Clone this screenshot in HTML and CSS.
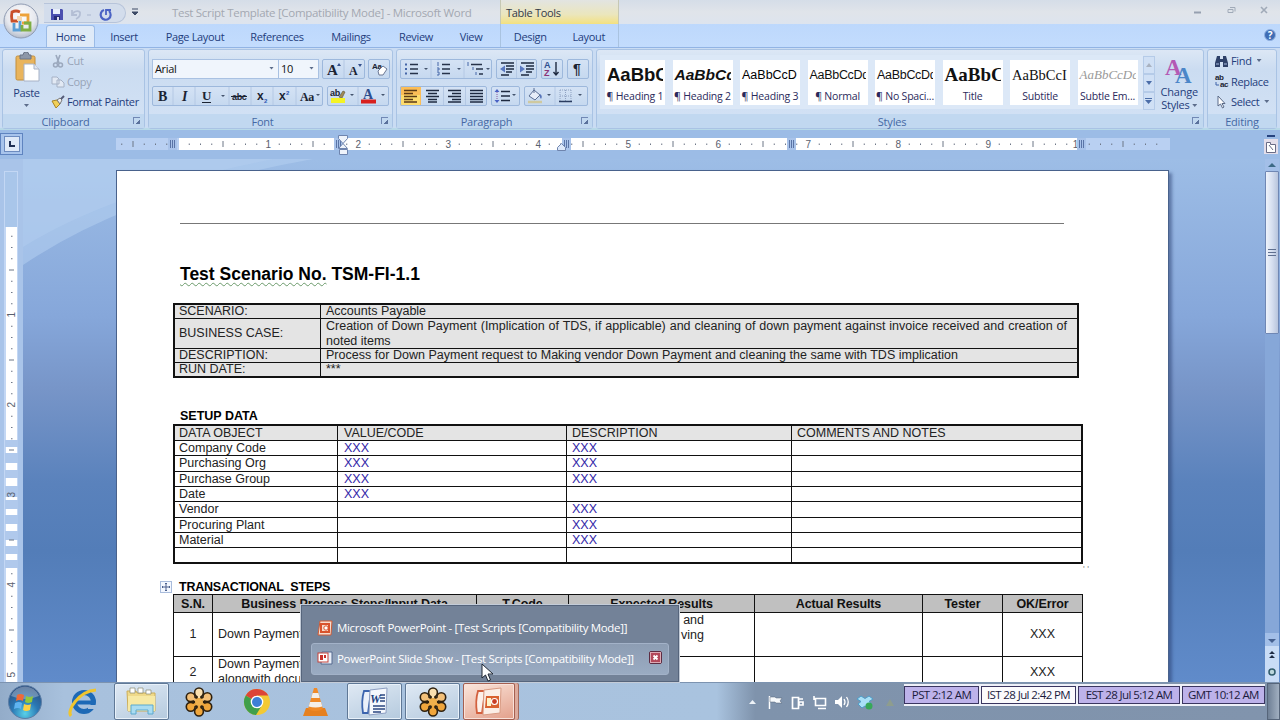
FILE: index.html
```html
<!DOCTYPE html>
<html lang="en">
<head>
    <meta charset="UTF-8">
    <meta name="viewport" content="width=device-width, initial-scale=1.0">
    <title>Test Script Template [Compatibility Mode] - Microsoft Word</title>
    <link rel="stylesheet" href="styles.css">
</head>
<body>
    <!-- Title bar -->
    <header class="titlebar">
        <div class="quick-access">
            <svg width="80" height="20" viewBox="0 0 80 20">
                <path d="M7 5h11l1 1v10H7z" fill="#4a4fb0"/><path d="M9 5h7v5H9z" fill="#e8eefc"/><path d="M10 12h6v4h-6z" fill="#272c78"/><path d="M13 13h2v3h-2z" fill="#dde"/>
                <path d="M28 6v5h5M28 11c2-5 9-5 8-1 0 2-2 4-4 5" fill="none" stroke="#b3bed4" stroke-width="1.800"/>
                <path d="M43 11h4" stroke="#a9b6cf"/>
                <path d="M60 6a5 5 0 1 0 5 1" fill="none" stroke="#4b63c4" stroke-width="2.200"/><path d="M62 11V6h5" fill="none" stroke="#4b63c4" stroke-width="1.800"/>
            </svg>
        </div>
        <svg class="qa-more" width="8" height="8" viewBox="0 0 8 8"><path d="M1 1h6M1 4h6l-3 3z" stroke="#3c4a66" fill="#3c4a66"/></svg>
        <span class="title">Test Script Template [Compatibility Mode] - Microsoft Word</span>
        <span class="table-tools">Table Tools</span>
        <svg class="win-buttons" width="90" height="24" viewBox="0 0 90 24">
            <path d="M4 12.500h7" stroke="#96a0b0" stroke-width="2"/>
            <path d="M38 9.500h5v3h-5zM40 7.500h5v4" stroke="#a0aab8" fill="none"/>
            <path d="M71 7l6 6M77 7l-6 6" stroke="#a0aab8" stroke-width="1.600"/>
        </svg>
    </header>
    <svg class="office-button" width="38" height="40" viewBox="0 0 38 40">
        <defs><radialGradient id="orb" cx=".5" cy=".35" r=".65"><stop offset="0" stop-color="#fff"/><stop offset=".65" stop-color="#e6e8ee"/><stop offset="1" stop-color="#b3bccb"/></radialGradient></defs>
        <circle cx="19" cy="20" r="17" fill="url(#orb)" stroke="#8f9bb2"/>
        <g fill="none" stroke-width="2.800">
            <path d="M18 11q-4-2-8 0-1 4 0 9h6" stroke="#c9502a"/>
            <path d="M18 14h8v8h-6" stroke="#eda23a"/>
            <path d="M12 22v7h6v-9" stroke="#5a9ed6"/>
            <path d="M20 24v5h8v-7h-6" stroke="#7fae45"/>
        </g>
        <path d="M15 15h5v5h-5z" fill="#f7d9b0"/>
    </svg>

    <!-- Tabs -->
    <nav class="tabs">
        <a class="tab active">Home</a>
        <a class="tab insert">Insert</a>
        <a class="tab page-layout">Page Layout</a>
        <a class="tab references">References</a>
        <a class="tab mailings">Mailings</a>
        <a class="tab review">Review</a>
        <a class="tab view">View</a>
        <div class="context-tabs">
            <a class="tab design">Design</a>
            <a class="tab layout">Layout</a>
        </div>
        <svg class="help" width="14" height="14" viewBox="0 0 14 14"><circle cx="7" cy="7" r="5.500" fill="#3f6db5" stroke="#8fb0e0"/><text x="7" y="10.500" text-anchor="middle" class="help-mark">?</text></svg>
    </nav>

    <!-- Ribbon -->
    <section class="ribbon">
        <div class="group clipboard">
            <div class="group-body">
                <div class="paste">
                    <svg width="28" height="32" viewBox="0 0 28 32">
                        <rect x="3" y="4" width="19" height="24" rx="1.500" fill="#e9b45c" stroke="#c28e3c"/>
                        <path d="M7 3h3a3 3 0 0 1 6 0h2v4H7z" fill="#8d97a8" stroke="#6a7486"/>
                        <path d="M11 12h10l5 5v12H11z" fill="#fff" stroke="#a7b2c6"/><path d="M21 12v5h5" fill="#dfe6f2" stroke="#a7b2c6"/>
                    </svg>
                    <span>Paste</span>
                    <i class="arrow"></i>
                </div>
                <div class="clip-list">
                    <span class="off"><svg width="14" height="14" viewBox="0 0 14 14"><path d="M5 1l3 8M9 1L6 9" stroke="#9ba8bd" stroke-width="1.600"/><circle cx="4.500" cy="11" r="2" fill="none" stroke="#9ba8bd" stroke-width="1.500"/><circle cx="9.500" cy="11" r="2" fill="none" stroke="#9ba8bd" stroke-width="1.500"/></svg>Cut</span>
                    <span class="off"><svg width="14" height="14" viewBox="0 0 14 14"><path d="M1 3h5l2 2v5H1zM6 6h4l3 3v4H6z" fill="#e2e9f4" stroke="#a6b2c6"/></svg>Copy</span>
                    <span><svg width="14" height="14" viewBox="0 0 14 14"><path d="M1 6l5-1 3 4-4 4z" fill="#f1cf57" stroke="#a98526"/><path d="M6 5l3-2 2 2-2 4z" fill="#eee" stroke="#777"/><path d="M10 4l3-3" stroke="#555c78" stroke-width="2"/></svg>Format Painter</span>
                </div>
            </div>
            <div class="group-label">Clipboard<i class="launcher"></i></div>
        </div>

        <div class="group font">
            <div class="group-body rows">
                <div class="row">
                    <div class="combo name">Arial<i class="arrow"></i></div>
                    <div class="combo size">10<i class="arrow"></i></div>
                    <svg class="btns grow" width="43" height="20" viewBox="0 0 43 20">
                        <text x="5" y="16" class="serif s15">A</text><path d="M15 7l2-3 2 3z" fill="#34508c"/>
                        <path d="M22 1v18" stroke="#b4c8e4"/>
                        <text x="27" y="16" class="serif s12">A</text><path d="M36 5h4l-2 3z" fill="#34508c"/>
                    </svg>
                    <svg class="btns" width="22" height="20" viewBox="0 0 22 20"><text x="4" y="10" class="sans s8">Aa</text><path d="M10 12l5-5 4 3-4 6h-4z" fill="#fff" stroke="#6c7894"/></svg>
                </div>
                <div class="row">
                    <svg class="btns" width="171" height="20" viewBox="0 0 171 20">
                        <text x="6" y="15" class="serif s14">B</text>
                        <text x="30" y="15" class="serif s14 ital">I</text>
                        <text x="50" y="14" class="serif s13">U</text><path d="M50 16.500h9" stroke="#1b2433"/>
                        <path d="M69 9h4l-2 2z" fill="#44546e"/>
                        <text x="80" y="14" class="sans s9">abc</text><path d="M79 10.500h16" stroke="#1b2433"/>
                        <text x="105" y="14" class="sans s12">x</text><text x="112" y="17" class="sans s6 blue">2</text>
                        <text x="127" y="14" class="sans s12">x</text><text x="134" y="9" class="sans s6 blue">2</text>
                        <text x="148" y="15" class="serif s12">Aa</text><path d="M164 8h4l-2 2z" fill="#44546e"/>
                        <path d="M21 1v18M43 1v18M77 1v18M99 1v18M121 1v18M144 1v18" stroke="#b4c8e4"/>
                    </svg>
                    <svg class="btns" width="62" height="20" viewBox="0 0 62 20">
                        <text x="3" y="10" class="sans s9">ab</text><path d="M12 11l4-6 2 1-3 6z" fill="#a08b55" stroke="#5c5030" stroke-width=".6"/><rect x="4" y="12" width="14" height="5" fill="#f4f325"/>
                        <path d="M23 8h4l-2 2z" fill="#44546e"/><path d="M31 1v18" stroke="#b4c8e4"/>
                        <text x="36" y="13" class="serif s14 navy">A</text><rect x="34" y="13.500" width="15" height="4" fill="#d8201e"/>
                        <path d="M54 8h4l-2 2z" fill="#44546e"/>
                    </svg>
                </div>
            </div>
            <div class="group-label">Font<i class="launcher"></i></div>
        </div>

        <div class="group paragraph">
            <div class="group-body rows">
                <div class="row">
                    <svg class="btns" width="92" height="20" viewBox="0 0 92 20">
                        <path d="M10 5.500h8M10 10h8M10 14.500h8M42 5.500h8M42 10h8M42 14.500h8M71 5.500h11M76 10h7M79 15h4" stroke="#26334a" stroke-width="1.500"/>
                        <path d="M5 4.500h2v2H5zM5 9h2v2H5zM5 13.500h2v2H5z" fill="#4566a8"/>
                        <path d="M38 3v4M37 9h2v2h-2M37 13h2v3h-2M68 3v4M73 8v3M76 13v3" stroke="#4566a8" fill="none"/>
                        <path d="M24 9h4l-2 2zM57 9h4l-2 2zM86 9h4l-2 2z" fill="#44546e"/>
                        <path d="M31 1v18M64 1v18" stroke="#b4c8e4"/>
                    </svg>
                    <svg class="btns" width="41" height="20" viewBox="0 0 41 20">
                        <path d="M5 4h13M10 7h8M10 10h8M10 13h6M5 16h8M25 4h13M30 7h8M30 10h8M30 13h6M25 16h8" stroke="#1e2a40" stroke-width="1.600"/>
                        <path d="M9 6.500v7L4 10zM24 6.500v7l5-3.500z" fill="#5b79c0"/><path d="M20.500 1v18" stroke="#b4c8e4"/>
                    </svg>
                    <svg class="btns" width="22" height="20" viewBox="0 0 22 20"><text x="3" y="9" class="sans s9 navy">A</text><text x="3" y="17" class="sans s9 plum">Z</text><path d="M15 3v13M12.500 13l2.500 3 2.500-3" stroke="#1e2a40" stroke-width="1.400" fill="none"/></svg>
                    <svg class="btns" width="22" height="20" viewBox="0 0 22 20"><text x="6" y="15" class="sans s14">¶</text></svg>
                </div>
                <div class="row">
                    <svg class="btns" width="87" height="20" viewBox="0 0 87 20">
                        <rect width="21" height="20" fill="#fbbd57"/><rect x="1" y="9" width="19" height="10" fill="#fddb6d"/>
                        <path d="M4 4.500h13M4 7.500h9M4 10.500h13M4 13.500h9M4 16h13" stroke="#5a3a17" stroke-width="1.400"/>
                        <path d="M26 4.500h13M28 7.500h9M26 10.500h13M28 13.500h9M28 16h9M48 4.500h13M52 7.500h9M48 10.500h13M52 13.500h9M48 16h13M70 4.500h13M70 7.500h13M70 10.500h13M70 13.500h13M70 16h13" stroke="#1e2a40" stroke-width="1.400"/>
                        <path d="M43.500 1v18M65.500 1v18" stroke="#b4c8e4"/>
                    </svg>
                    <svg class="btns" width="29" height="20" viewBox="0 0 29 20"><path d="M10 5.500h9M10 10h9M10 14.500h9" stroke="#1e2a40" stroke-width="1.500"/><path d="M6 3l2.500 3h-5zM6 17l2.500-3h-5z" fill="#4a62c4"/><path d="M6 6v8" stroke="#8c5aa0" stroke-dasharray="1 1"/><path d="M21 8h4l-2 2z" fill="#44546e"/></svg>
                    <svg class="btns fill" width="64" height="20" viewBox="0 0 64 20">
                        <path d="M5 10l5-6 6 5-5 5z" fill="#e6edf8" stroke="#5b6f94"/><path d="M10 7V2" stroke="#5b6f94"/><path d="M16 8q3 2 1 5-2-2-1-5" fill="#5573b8"/><path d="M4 16h14" stroke="#cfc9a0" stroke-width="2.500"/>
                        <path d="M23 8h4l-2 2zM54 8h4l-2 2z" fill="#44546e"/><path d="M31 1v18" stroke="#b4c8e4"/>
                        <path d="M36 4h11M36 4v11M41.500 4v11M47 4v11M36 10h11" stroke="#8fa2c2" stroke-dasharray="1 1" fill="none"/><path d="M35 15.500h13" stroke="#2b3c60" stroke-width="1.500"/>
                    </svg>
                </div>
            </div>
            <div class="group-label">Paragraph<i class="launcher"></i></div>
        </div>

        <div class="group styles">
            <div class="group-body">
                <div class="gallery">
                    <div class="style"><b class="h1">AaBbC</b><span>¶ Heading 1</span></div>
                    <div class="style"><b class="h2">AaBbCc</b><span>¶ Heading 2</span></div>
                    <div class="style"><b class="h3">AaBbCcD</b><span>¶ Heading 3</span></div>
                    <div class="style"><b class="normal">AaBbCcDd</b><span>¶ Normal</span></div>
                    <div class="style"><b class="normal">AaBbCcDd</b><span>¶ No Spaci...</span></div>
                    <div class="style"><b class="big">AaBbC</b><span>Title</span></div>
                    <div class="style"><b class="sub">AaBbCcI</b><span>Subtitle</span></div>
                    <div class="style"><b class="subtle">AaBbCcDc</b><span>Subtle Em...</span></div>
                </div>
                <div class="gallery-scroll">
                    <span><svg width="6" height="4" viewBox="0 0 6 4"><path d="M0 4h6L3 0z" fill="#a9b2c0"/></svg></span>
                    <span><svg width="6" height="4" viewBox="0 0 6 4"><path d="M0 0h6L3 4z" fill="#4b6da8"/></svg></span>
                    <span><svg width="7" height="6" viewBox="0 0 7 6"><path d="M0 .5h7" stroke="#4b6da8"/><path d="M0 2h7L3.500 6z" fill="#4b6da8"/></svg></span>
                </div>
                <div class="change-styles">
                    <svg width="30" height="30" viewBox="0 0 30 30"><text x="1" y="19" class="big-a pink">A</text><text x="11" y="27" class="big-a sky">A</text></svg>
                    <span>Change</span>
                    <span>Styles <i class="arrow"></i></span>
                </div>
            </div>
            <div class="group-label">Styles<i class="launcher"></i></div>
        </div>

        <div class="group editing">
            <div class="group-body">
                <div class="edit-list">
                    <span><svg width="15" height="14" viewBox="0 0 15 14"><path d="M3 2h3v3h3V2h3l2 7v4h-5V8H6v5H1V9z" fill="#2e4068"/><path d="M2 10h3M10 10h3" stroke="#a9bde0"/></svg>Find <i class="arrow"></i></span>
                    <span><svg width="15" height="14" viewBox="0 0 15 14"><text x="1" y="6" class="sans s7">ab</text><text x="6" y="13" class="sans s7">ac</text><path d="M2 8v3h3" fill="none" stroke="#3e63a8"/></svg>Replace</span>
                    <span><svg width="15" height="14" viewBox="0 0 15 14"><path d="M4 1v10l2.500-2 2 4 1.500-1-2-3.500h3z" fill="#fff" stroke="#5a6a88"/></svg>Select <i class="arrow"></i></span>
                </div>
            </div>
            <div class="group-label">Editing</div>
        </div>
    </section>

    <!-- Horizontal ruler -->
    <div class="ruler-row">
        <div class="tab-stop"><svg width="14" height="14" viewBox="0 0 14 14"><path d="M5 4v5h5" fill="none" stroke="#1f2f55" stroke-width="2"/></svg></div>
        <svg id="hruler" width="1054" height="29" viewBox="116 130 1054 29">
            <rect x="116" y="138" width="1054" height="12" fill="#b9d0f2"/>
            <rect x="179" y="138" width="900" height="12" fill="#fff"/>
            <g id="h-ticks"></g>
            <g id="h-marks"></g>
            <path d="M338.500 135.500h9v3l-4.500 5 4.500 5h-9l4.500-5-4.500-5zM339.500 149.500h8v5h-8z" fill="#eef3fb" stroke="#6e84ae"/>
            <path d="M557.500 150.500v-3l4-4 4 4v3z" fill="#dce8fa" stroke="#6e84ae"/>
        </svg>
        <svg class="ruler-toggle" width="14" height="26" viewBox="0 0 14 26"><path d="M3 3h8" stroke="#26437f" stroke-width="2"/><rect y="6" width="14" height="15" fill="#e3deea"/><path d="M2.500 9.500h4v2h5v8h-9zM5 12l4 5" fill="#fff" stroke="#6a6c86"/></svg>
    </div>

    <!-- Workspace -->
    <main class="workspace">
        <svg class="swoosh" width="340" height="120" viewBox="0 0 340 120">
            <path d="M0 0h290Q110 32 0 106z" fill="#b4cff0" opacity=".55"/>
            <path d="M0 0h250Q90 32 0 88z" fill="#b4cff0" opacity=".45"/>
        </svg>
        <div class="vruler">
            <svg width="23" height="523" viewBox="0 159 23 523">
                <rect x="4" y="171" width="14" height="511" fill="#c3d7f4"/>
                <rect x="5" y="172" width="12" height="55" fill="#a9c6ea"/>
                <rect x="6" y="227" width="11" height="455" fill="#fff"/>
                <g id="v-bands"></g>
                <g id="v-ticks"></g>
            </svg>
        </div>
        <article class="page">
            <div class="header-line"></div>
            <h1><u>Test Scenario No.</u> TSM-FI-1.1</h1>
            <div class="grid scenario">
                <div>SCENARIO:</div><div>Accounts Payable</div>
                <div>BUSINESS CASE:</div><div class="wrap">Creation of Down Payment (Implication of TDS, if applicable) and cleaning of down payment against invoice received and creation of noted items</div>
                <div>DESCRIPTION:</div><div class="desc">Process for Down Payment request to Making vendor Down Payment and cleaning the same with TDS implication</div>
                <div>RUN DATE:</div><div>***</div>
            </div>
            <h2 class="setup-title">SETUP DATA</h2>
            <div class="grid setup">
                <div class="th">DATA OBJECT</div><div class="th">VALUE/CODE</div><div class="th">DESCRIPTION</div><div class="th">COMMENTS AND NOTES</div>
                <div>Company Code</div><div class="x">XXX</div><div class="x">XXX</div><div></div>
                <div>Purchasing Org</div><div class="x">XXX</div><div class="x">XXX</div><div></div>
                <div>Purchase Group</div><div class="x">XXX</div><div class="x">XXX</div><div></div>
                <div>Date</div><div class="x">XXX</div><div></div><div></div>
                <div>Vendor</div><div></div><div class="x">XXX</div><div></div>
                <div>Procuring Plant</div><div></div><div class="x">XXX</div><div></div>
                <div>Material</div><div></div><div class="x">XXX</div><div></div>
                <div></div><div></div><div></div><div></div>
            </div>
            <div class="steps-title">
                <svg width="13" height="13" viewBox="0 0 13 13"><rect x=".5" y=".5" width="11" height="11" fill="#f4f8ff" stroke="#a9bcdc"/><path d="M6 2v8M2 6h8M5 3l1-1 1 1M5 9l1 1 1-1M3 5L2 6l1 1M9 5l1 1-1 1" fill="none" stroke="#4a5f8c"/></svg>
                <h2>TRANSACTIONAL&nbsp; STEPS</h2>
            </div>
            <div class="grid steps">
                <div class="th">S.N.</div><div class="th">Business Process Steps/Input Data</div><div class="th">T.Code</div><div class="th">Expected Results</div><div class="th">Actual Results</div><div class="th">Tester</div><div class="th">OK/Error</div>
                <div class="mid">1</div><div>Down Payment</div><div></div><div class="expected">and<br>ving</div><div></div><div></div><div class="mid">XXX</div>
                <div class="mid">2</div><div class="two">Down Payment<br>alongwith docu</div><div></div><div></div><div></div><div></div><div class="mid">XXX</div>
            </div>
            <span class="row-end">' '</span>
        </article>
        <div class="scrollbar">
            <i class="up"></i>
            <div class="thumb"><i></i><i></i><i></i></div>
            <div class="track"></div>
            <svg width="14" height="49" viewBox="0 0 14 49">
                <path d="M3 6h8l-4 4z" fill="#45608f"/>
                <rect y="13" width="14" height="36" fill="#c9dcf6"/>
                <path d="M4 21h6l-3-3zM4 25h6l-3-3z" fill="#1f2c44"/>
                <circle cx="7" cy="39" r="3" fill="#bcd6dc" stroke="#2f5a6a" stroke-width="1.500"/>
            </svg>
        </div>
    </main>

    <!-- Taskbar -->
    <footer class="taskbar">
        <svg class="task start" width="54" height="38" viewBox="0 0 54 38">
            <defs><radialGradient id="start" cx=".5" cy=".85" r=".8"><stop offset="0" stop-color="#59d0e8"/><stop offset=".5" stop-color="#2a78b4"/><stop offset="1" stop-color="#2b4f80"/></radialGradient></defs>
            <circle cx="25" cy="19" r="16.500" fill="url(#start)" stroke="#5d7ea6"/><path d="M11 13a15 15 0 0 1 28 0q-14 6-28 0" fill="#fff" opacity=".3"/>
            <path d="M17 12q3-2 7 0l-1 6q-4-2-7 0z" fill="#ee6a38"/><path d="M26 13q4 2 7 0l-1 6q-4 2-7 0z" fill="#93c83d"/><path d="M15 20q4-2 7 0l-1 6q-3-2-7 0z" fill="#5fb4f0"/><path d="M24 21q4 2 7 0l-1 6q-4 2-7 0z" fill="#fbd144"/>
        </svg>
        <svg class="task ie" width="60" height="38" viewBox="0 0 60 38">
            <circle cx="30" cy="19" r="9.500" fill="none" stroke="#1d69b6" stroke-width="5"/><path d="M22 19.500h19" stroke="#1d69b6" stroke-width="4"/><path d="M34 22h9v4h-9z" fill="#a7c0dc"/>
            <path d="M17 33c-5-5 8-25 25-26" fill="none" stroke="#f0c52e" stroke-width="3"/>
        </svg>
        <div class="task button">
            <svg width="32" height="30" viewBox="0 0 32 30"><path d="M1 4h9l1 2h18v18H2z" fill="#efd989" stroke="#cdae58"/><path d="M4 1h5v5H4zM12 1h5v5h-5zM20 3h5v4h-5z" fill="#fff" stroke="#8b8b70" stroke-width=".7"/><path d="M2 9h27v15H2z" fill="#f7e9a4"/><path d="M5 27v-9h22v9h-5v-4H10v4z" fill="#a9dcf1" stroke="#5ba9ce"/></svg>
        </div>
        <svg class="task plain" width="58" height="38" viewBox="0 0 58 38"><g class="flower"></g></svg>
        <svg class="task plain" width="58" height="38" viewBox="0 0 58 38">
            <circle cx="29" cy="19" r="13" fill="#f3c934"/><path d="M29 19L17.700 12.500A13 13 0 0 1 40.300 12.500H29z" fill="#dc4437"/><path d="M17.700 12.500A13 13 0 0 0 28 32l5.500-9L29 19z" fill="#3f9f4c"/>
            <circle cx="29" cy="19" r="6.300" fill="#fff"/><circle cx="29" cy="19" r="5" fill="#3d7fd6"/>
        </svg>
        <svg class="task plain vlc" width="59" height="38" viewBox="0 0 59 38">
            <path d="M20 25h19l3 8H17z" fill="#e6801f"/><path d="M28 5h3l6 21q-7.500 4-15 0z" fill="#f08a28"/><path d="M26.600 10h5.800l1.300 5h-8.400zM24 19h11l1.300 4.500q-6.800 2-13.600 0z" fill="#f4efe9"/>
        </svg>
        <div class="task button word">
            <svg width="32" height="32" viewBox="0 0 32 32"><path d="M5 5h7l-3 22H4q-2-12 1-22z" fill="#eaf0fa" stroke="#3b64ae" stroke-width="1.800"/><path d="M11 4l17-2-1 25-17 2z" fill="#f5f8fd" stroke="#8c9ec2"/><path d="M21 9h5M21 12h5M21 15h5M14 20h12M14 23h12M14 26h8" stroke="#2b4580" stroke-width="1.600"/><text x="11" y="17" class="word-w">W</text></svg>
        </div>
        <div class="task button"><svg width="34" height="36" viewBox="12 1 34 36"><g class="flower"></g></svg></div>
        <div class="task button ppt">
            <svg width="32" height="32" viewBox="0 0 32 32"><path d="M5 5h7l-3 22H4q-2-12 1-22z" fill="#fdf1ea" stroke="#d3603e" stroke-width="1.800"/><path d="M11 4l17-2-1 25-17 2z" fill="#fbeee6" stroke="#d99b83"/><path d="M13 10h13v12H12z" fill="#d9612f"/><path d="M14 12h4v8h-4z" fill="#fff3c9"/><circle cx="21.500" cy="15.500" r="3" fill="#c93c22" stroke="#fff" stroke-width="1.200"/></svg>
        </div>
        <div class="tray">
            <svg width="160" height="24" viewBox="744 690 160 24">
                <path d="M749 704h7l-3.500-4z" fill="#eef3f8"/>
                <path d="M769.500 696v13" stroke="#fff" stroke-width="1.500"/><path d="M770 697h5l1 1h6l-2 3 2 2h-6l-1-1h-5z" fill="#f7fafc" stroke="#56657a" stroke-width=".5"/>
                <path d="M792.500 697.500h6v11h-6zM798 699h5M799 702h4v3h-4z" fill="none" stroke="#fff" stroke-width="1.700"/>
                <path d="M815.500 698.500h10v7h-10zM818 708.500h8M814 696v4" fill="none" stroke="#fff" stroke-width="1.600"/>
                <path d="M835 700h3l4-4v12l-4-4h-3z" fill="#fff"/><path d="M844 699q2 3 0 6M846.500 697q3.500 5 0 10" fill="none" stroke="#fff" stroke-width="1.300"/>
                <path d="M861 696l4 2.500 4-2.500 4 3-4 2.500 3 2.500-4 4-3-2-3 2-4-4 3-2.500-4-2.500z" fill="#a9e0f6" stroke="#4d9cc7"/><circle cx="869" cy="706" r="3.500" fill="#38a857"/>
                <path d="M886 706l4-7 4 7z" fill="#8e9d8e"/>
            </svg>
            <div class="clocks">
                <span class="pst">PST 2:12 AM</span><span class="ist">IST 28 Jul 2:42 PM</span><span class="est">EST 28 Jul 5:12 AM</span><span class="gmt">GMT 10:12 AM</span>
            </div>
            <div class="show-desktop"></div>
        </div>
    </footer>

    <!-- Window list over the taskbar -->
    <div class="jump">
        <div class="jump-item">
            <svg width="16" height="16" viewBox="0 0 16 16"><path d="M3 1h12l-1 14H1z" fill="#f6dccd" stroke="#cf5b36"/><path d="M4 4h8v8H4z" fill="none" stroke="#d9532c" stroke-width="2"/><circle cx="9" cy="8" r="2.200" fill="#fff" stroke="#d9532c"/></svg>
            <span>Microsoft PowerPoint - [Test Scripts [Compatibility Mode]]</span>
        </div>
        <div class="jump-item hover">
            <svg width="16" height="16" viewBox="0 0 16 16"><path d="M5 2h10v12H4z" fill="#e8eef8" stroke="#54688e"/><rect x="1" y="3" width="10" height="9" fill="#fff" stroke="#c4423a"/><path d="M3 5h3v5H3zM7 5h2v3H7z" fill="#c9322b"/></svg>
            <span>PowerPoint Slide Show - [Test Scripts [Compatibility Mode]]</span>
            <svg class="close" width="14" height="14" viewBox="0 0 14 14"><rect x=".5" y=".5" width="12" height="12" rx="1.500" fill="#b3485a" stroke="#5d2c42"/><rect x="1.500" y="1.500" width="10" height="10" fill="none" stroke="#dca9b4"/><path d="M4.500 4.500l4 4M8.500 4.500l-4 4" stroke="#fff" stroke-width="1.800"/></svg>
        </div>
    </div>
    <svg class="cursor" width="14" height="20" viewBox="0 0 14 20"><path d="M1 1v14l3.500-3 2.500 6 2.500-1-2.500-6h5z" fill="#fff" stroke="#1c2430"/></svg>

    <script>
        const INCH = 90;

        function tick(x1, y1, x2, y2) {
            return `<path d="M${x1} ${y1}L${x2} ${y2}" stroke="#6d7686"/>`;
        }

        // Horizontal ruler: eighths of an inch, zero at x = 178
        let h = '';
        for (let i = -5; i < 88; i++) {
            const x = 178 + i * INCH / 8;
            if (i === 0) continue;
            if (i % 8 === 0) {
                h += `<text x="${x}" y="148" text-anchor="middle" class="num">${i / 8}</text>`;
            } else if (i % 4 === 0) {
                h += tick(x, 141, x, 147);
            } else {
                h += tick(x, 143.5, x, 145);
            }
        }
        document.getElementById('h-ticks').innerHTML = h;

        // Column markers on the ruler
        document.getElementById('h-marks').innerHTML = [168, 334, 562, 787, 1077].map(x =>
            `<rect x="${x}" y="138" width="9" height="12" fill="#a9c3ea"/>
             <path d="M${x + 2.5} 140v8M${x + 4.5} 140v8M${x + 6.5} 140v8" stroke="#5a74a6"/>`
        ).join('');

        // Vertical ruler, zero at y = 225
        const bands = [[440, 7], [453, 10], [470, 8], [486, 11], [500, 9], [515, 9], [531, 9], [546, 8], [560, 8]];
        document.getElementById('v-bands').innerHTML = bands.map(b =>
            `<rect x="5" y="${b[0]}" width="13" height="${b[1]}" fill="#b0c9ec"/>`
        ).join('');
        let v = '';
        for (let i = 1; i < 41; i++) {
            const y = 225 + i * INCH / 8;
            if (i % 8 === 0) {
                v += `<text transform="translate(15 ${y}) rotate(-90)" text-anchor="middle" class="num">${i / 8}</text>`;
            } else if (i % 4 === 0) {
                v += tick(9, y, 14, y);
            } else if (y < 440 || y > 570) {
                v += tick(11, y, 12.5, y);
            }
        }
        document.getElementById('v-ticks').innerHTML = v;

        // Flower icon: six petals round a core
        document.querySelectorAll('.flower').forEach(g => {
            let petals = '';
            for (let a = 0; a < 360; a += 60) {
                const x = 29 + 9.6 * Math.sin(a * Math.PI / 180);
                const y = 19 - 9.6 * Math.cos(a * Math.PI / 180);
                const fill = y < 12 ? '#fae0b0' : y < 20 ? '#f3c079' : '#f0a63c';
                petals += `<path d="M29 19L${x} ${y}" stroke="#2e2110" stroke-width="6"/>
                           <circle cx="${x}" cy="${y}" r="4.4" fill="${fill}" stroke="#2e2110" stroke-width="1.6"/>
                           <path d="M29 19L${x} ${y}" stroke="${fill}" stroke-width="2.5"/>`;
            }
            g.innerHTML = petals + '<circle cx="29" cy="19" r="4" fill="#f0b04c"/>';
        });
    </script>
</body>
</html>
```
FILE: styles.css
```css
* {
    margin: 0;
    padding: 0;
    box-sizing: border-box;
}

body {
    width: 1280px;
    height: 720px;
    overflow: hidden;
    display: flex;
    flex-direction: column;
    position: relative;
    font-family: "Open Sans", "Noto Sans", sans-serif;
    font-size: 11px;
    letter-spacing: -0.35px;
    color: #1f3d7c;
    background-color: #bfdbff;
}

svg {
    display: block;
    flex-shrink: 0;
}

/* Title bar */
.titlebar {
    height: 24px;
    flex-shrink: 0;
    display: flex;
    align-items: center;
    background: linear-gradient(#d5dde8, #e0e4ea 50%, #dde4ee);
}

.quick-access {
    width: 82px;
    height: 20px;
    margin-left: 44px;
    border: 1px solid #b7c4da;
    border-left: none;
    border-radius: 0 10px 10px 0;
    background: #d3ddec;
    margin-top: 2px;
}

.qa-more {
    margin-left: 5px;
}

.title {
    width: 302px;
    margin-left: 33px;
    font-size: 11.5px;
    letter-spacing: -0.3px;
    white-space: nowrap;
    color: #a3a8b2;
}

.table-tools {
    width: 119px;
    height: 24px;
    margin-left: 26px;
    padding: 4px 0 0 5px;
    line-height: 18px;
    color: #333a48;
    border-left: 1px solid #c6c8b4;
    border-right: 1px solid #c6c8b4;
    background: linear-gradient(#e2e4e2, #ebe6bd 60%, #f3e180);
    letter-spacing: -0.3px;
}

.win-buttons {
    margin-left: auto;
}

.office-button {
    position: absolute;
    left: 2px;
    top: 1px;
}

/* Tabs */
.tabs {
    height: 23px;
    flex-shrink: 0;
    display: flex;
    padding-left: 46px;
    background: linear-gradient(#bdd8fc, #c3dcfd);
}

.tab {
    text-align: center;
    line-height: 25px;
    white-space: nowrap;
}

.active {
    width: 49px;
    background: #dfeaf8;
    border: 1px solid #9bbbe6;
    border-bottom: none;
    border-radius: 3px 3px 0 0;
    line-height: 22px;
    margin-top: 1px;
}

.insert { width: 58px; }
.page-layout { width: 84px; }
.references { width: 80px; }
.mailings { width: 68px; }
.review { width: 62px; }
.view { width: 48px; }

.context-tabs {
    display: flex;
    width: 119px;
    margin-left: 5px;
    border-left: 1px solid #a9c3e0;
    border-right: 1px solid #a9c3e0;
}

.context-tabs .tab {
    width: 59px;
}

.help {
    margin: 4px 3px 0 auto;
}

.help-mark {
    font: bold 10px "Open Sans", sans-serif;
    fill: #fff;
}

/* Ribbon */
.ribbon {
    height: 83px;
    flex-shrink: 0;
    display: flex;
    gap: 3px;
    padding: 1px 2px 2px;
    background: #cadcf3;
    border-top: 1px solid #92b4e4;
    border-bottom: 2px solid #b8d9e8;
}

.group {
    height: 80px;
    display: flex;
    flex-direction: column;
    border: 1px solid #a9c3e4;
    border-radius: 3px;
    background: linear-gradient(#dce7f5, #cbdcf1 25%, #d3e2f5);
}

.clipboard { width: 143px; }
.font { width: 245px; }
.paragraph { width: 197px; }
.styles { width: 608px; }
.editing { width: 70px; }

.group-body {
    height: 64px;
    display: flex;
}

.group-label {
    height: 14px;
    display: flex;
    justify-content: center;
    align-items: center;
    background: #c1d8f0;
    color: #4568a4;
    position: relative;
    padding-right: 16px;
    line-height: 13px;
    letter-spacing: -0.2px;
}

.editing .group-label {
    padding-right: 0;
}

.launcher {
    position: absolute;
    right: 4px;
    top: 3px;
    width: 7px;
    height: 7px;
    border-left: 1px solid #7188b4;
    border-top: 1px solid #7188b4;
    background: linear-gradient(135deg, transparent 60%, #5a719c 60%);
}

.arrow {
    display: inline-block;
    width: 5px;
    height: 3px;
    background: #5d6d8b;
    clip-path: polygon(0 0, 100% 0, 50% 100%);
    vertical-align: middle;
}

.paste {
    width: 46px;
    padding: 2px 0 0 1px;
    display: flex;
    flex-direction: column;
    align-items: center;
    line-height: 15px;
}

.paste span {
    margin: 1px 0 4px;
}

.clip-list,
.edit-list {
    display: flex;
    flex-direction: column;
    gap: 5.5px;
    padding-top: 3px;
}

.clip-list span,
.edit-list span {
    display: flex;
    align-items: center;
    gap: 2px;
    height: 15px;
    white-space: nowrap;
}

.clip-list {
    margin-left: 2px;
}

.edit-list {
    margin-left: 6px;
}

.edit-list .arrow {
    margin-left: 3px;
}

.off {
    color: #98a4b8;
}

.rows {
    flex-direction: column;
    gap: 7px;
    padding: 9px 0 0 3px;
}

.row {
    display: flex;
    gap: 4px;
    height: 20px;
}

.font .row:first-child {
    gap: 3px;
}

.combo {
    height: 20px;
    background: #f0f5fc;
    border: 1px solid #a9c1e2;
    color: #111;
    display: flex;
    align-items: center;
    justify-content: space-between;
    padding: 0 4px 2px 2px;
}

.name { width: 127px; }
.size { width: 41px; margin-left: -4px; }

.btns {
    border-radius: 2px;
    outline: 1px solid #9db8dc;
    outline-offset: -1px;
    background: linear-gradient(#d5e3f5, #c5d8ef);
}

.serif {
    font-family: "Liberation Serif", serif;
    font-weight: bold;
    fill: #1b2433;
}

.sans {
    font-family: "Liberation Sans", sans-serif;
    font-weight: bold;
    fill: #1b2433;
}

.s6 { font-size: 6px; }
.s7 { font-size: 8px; }
.s8 { font-size: 8px; }
.s9 { font-size: 9px; }
.s12 { font-size: 12px; }
.s13 { font-size: 13px; }
.s14 { font-size: 14px; }
.s15 { font-size: 15px; }
.ital { font-style: italic; }
.navy { fill: #2d4d8e; }
.plum { fill: #8b3478; }
.blue { fill: #2c55b4; }

/* Styles gallery */
.gallery {
    display: flex;
    gap: 7.5px;
    height: 54px;
    margin: 5px 0 0 3px;
    padding: 5px;
    background: #dce8f7;
}

.style {
    width: 60px;
    height: 45px;
    background: #fff;
    display: flex;
    flex-direction: column;
    overflow: hidden;
    text-align: center;
    white-space: nowrap;
    color: #2a2a5c;
    font-size: 10.5px;
    letter-spacing: -0.2px;
}

.style b {
    height: 29px;
    line-height: 30px;
    padding-left: 2px;
    margin-right: 2px;
    overflow: hidden;
    text-align: left;
    color: #111;
    font-family: "Liberation Sans", sans-serif;
    letter-spacing: 0;
}

.style span {
    line-height: 14px;
}

.style .h1 { font-size: 18.5px; }
.style .h2 { font-size: 15.5px; font-style: italic; }
.style .h3 { font-size: 12.5px; font-weight: normal; color: #000; }
.style .normal { font-size: 12.5px; font-weight: normal; letter-spacing: -0.3px; }
.style .big { font-family: "Liberation Serif", serif; font-size: 19px; }
.style .sub { font-family: "Liberation Serif", serif; font-size: 14.5px; font-weight: normal; }
.style .subtle { font-family: "Liberation Serif", serif; font-size: 13px; font-weight: normal; font-style: italic; color: #999; }

.gallery-scroll {
    width: 13px;
    margin-top: 6px;
}

.gallery-scroll span {
    height: 18px;
    display: flex;
    align-items: center;
    justify-content: center;
    background: #d0e0f5;
    border: 1px solid #b5cbe8;
}

.change-styles {
    width: 48px;
    display: flex;
    flex-direction: column;
    align-items: center;
    padding-top: 6px;
    line-height: 12.5px;
    letter-spacing: -0.2px;
}

.big-a {
    font: bold 23px "Liberation Serif", serif;
}

.pink { fill: #b45ab4; }
.sky { fill: #4b86c8; }

/* Rulers */
.ruler-row {
    height: 29px;
    flex-shrink: 0;
    display: flex;
    justify-content: space-between;
    align-items: flex-start;
    background: #9cbce6;
}

.tab-stop {
    width: 23px;
    height: 22px;
    margin: 3px 93px 0 0;
    display: flex;
    align-items: center;
    justify-content: center;
    background: #a8c4ec;
    border: 1px solid #5f84c0;
}

.tab-stop svg {
    background: #dfe9f8;
    outline: 1px solid #6d8cc0;
}

.ruler-toggle {
    margin: 3px 2px 0 auto;
}

.num {
    font: 10px "Liberation Sans", sans-serif;
    fill: #59606e;
}

/* Workspace */
.workspace {
    flex: 1;
    min-height: 0;
    overflow: hidden;
    display: flex;
    position: relative;
    background: linear-gradient(#9dbde6, #86a7da 30%, #7795c8 44%, #5a82bc 62%, #537db8 75%, #608bca);
}

.swoosh {
    position: absolute;
    left: 23px;
    top: 0;
}

.vruler {
    width: 23px;
    margin-right: 93px;
    background: #a9c4e9;
}

.page {
    width: 1053px;
    height: 520px;
    margin-top: 11px;
    padding: 0 0 0 56px;
    position: relative;
    background: #fff;
    border: 1px solid #49628c;
    box-shadow: 3px 3px 3px rgba(40, 60, 110, 0.5);
    font-family: "Liberation Sans", Arial, sans-serif;
    font-size: 12.5px;
    letter-spacing: 0;
    color: #222;
}

.header-line {
    width: 884px;
    height: 1px;
    margin: 52px 0 0 7px;
    background: #777;
}

.page h1 {
    margin: 39px 0 0 7px;
    height: 22px;
    line-height: 22px;
    font-size: 17.5px;
    color: #000;
    white-space: nowrap;
}

.page h1 u {
    text-decoration: underline wavy #6a9a6a 1px;
    text-underline-offset: 2px;
}

.page h2 {
    font-size: 12.5px;
    line-height: 15px;
    color: #000;
    letter-spacing: 0;
}

.grid {
    display: grid;
    gap: 1px;
    background: #111;
    border: 2px solid #111;
}

.grid > div {
    display: flex;
    align-items: center;
    min-width: 0;
    min-height: 0;
    padding-left: 5px;
    line-height: 15px;
    white-space: nowrap;
    background: #fff;
}

.scenario {
    width: 906px;
    margin-top: 18px;
    grid-template-columns: 145px 1fr;
    grid-template-rows: 13px 29px 13px 13px;
}

.scenario > div {
    background: #e4e4e4;
}

.scenario > div:nth-child(odd),
.setup > div:nth-child(4n+1) {
    padding-left: 4px;
}

.setup > div:nth-child(4n+2) {
    padding-left: 6px;
}

.grid .wrap {
    display: block;
    white-space: normal;
    text-align: justify;
    padding-right: 10px;
}

.grid .desc {
    letter-spacing: 0.02px;
}

.setup-title {
    margin: 31px 0 0 7px;
}

.setup {
    width: 910px;
    grid-template-columns: 162px 228px 224px 1fr;
    grid-template-rows: 14px 14px 15px 14px 14px 15px 14px 14px 14px;
}

.setup .th {
    background: #e4e4e4;
}

.grid .x {
    color: #3326a8;
}

.steps-title {
    display: flex;
    align-items: flex-end;
    gap: 1px;
    height: 30px;
    margin-left: -13px;
}

.steps-title h2 {
    margin: 0 0 -1px 5px;
    letter-spacing: -0.22px;
}

.steps {
    width: 910px;
    border-width: 1px;
    grid-template-columns: 38px 263px 91px 185px 167px 79px 1fr;
    grid-template-rows: 17px 43px 30px;
}

.steps .th {
    background: #c0c0c0;
    justify-content: center;
    font-weight: bold;
    padding: 1px 0 0;
    color: #111;
    letter-spacing: -0.1px;
}

.grid .mid {
    justify-content: center;
    padding: 0;
}

.grid .expected {
    align-items: flex-start;
    justify-content: flex-end;
    text-align: right;
    padding-right: 50px;
}

.row-end {
    position: absolute;
    left: 966px;
    top: 393px;
    font-size: 9px;
    color: #888;
}

.scrollbar {
    width: 14px;
    margin-left: auto;
    margin-right: 1px;
    display: flex;
    flex-direction: column;
    background: #a3bfe8;
}

.up {
    height: 4px;
    width: 8px;
    margin: 4px 3px;
    background: #3c6a86;
    clip-path: polygon(50% 0, 100% 100%, 0 100%);
}

.thumb {
    height: 163px;
    border: 1px solid #6f87b4;
    border-radius: 1px;
    background: linear-gradient(90deg, #eef3fb, #d6dff0 50%, #b7c4dc);
    display: flex;
    flex-direction: column;
    align-items: center;
    justify-content: center;
    gap: 2px;
}

.thumb i {
    width: 8px;
    height: 1px;
    background: #5f6f90;
}

.track {
    flex: 1;
    background: #86a7d8;
}

/* Taskbar */
.taskbar {
    height: 38px;
    flex-shrink: 0;
    display: flex;
    border-top: 1px solid #7c93b0;
    background: linear-gradient(90deg, #93acc9, #a8c1dd 5%, #a9c3df 56%, #7f93ac 59%, #8194ad);
}

.button {
    width: 55px;
    height: 37px;
    display: flex;
    align-items: center;
    justify-content: center;
    border: 1px solid #5f7896;
    border-radius: 2px;
    background: linear-gradient(160deg, #dfe9f4, #b5cade);
    box-shadow: inset 0 0 0 1px #e8f1fa;
    margin-right: 3px;
}

.taskbar .plain:nth-child(4) { margin-left: -2px; }
.vlc { margin-right: 2px; }

.word-w {
    font: italic bold 12px "Liberation Serif", serif;
    fill: #22407e;
}

.ppt {
    width: 52px;
    border-color: #a55f50;
    background: linear-gradient(160deg, #fbe6dc, #e3a08b);
    box-shadow: inset 0 0 0 1px #f9e2da, 3px 0 0 #dcaa9c, 4px 0 0 #a56a5c;
}

.tray {
    display: flex;
    margin-left: auto;
}

.tray > svg {
    margin-top: 7px;
}

.clocks {
    display: flex;
    gap: 2px;
    margin: 1px 2px 0 0;
    padding: 2px 0;
    height: 22px;
    background: #eef0f8;
    color: #1a1a3c;
    font-size: 11.5px;
    letter-spacing: -0.6px;
}

.clocks span {
    height: 18px;
    border: 1px solid #3a3560;
    text-align: center;
    line-height: 16px;
    white-space: nowrap;
    background: #bdb2ea;
}

.clocks .pst { width: 75px; }
.clocks .ist { width: 95px; background: #fbfafc; }
.clocks .est { width: 102px; }
.clocks .gmt { width: 83px; }

.show-desktop {
    width: 13px;
    border: 1px solid #56657a;
    background: linear-gradient(90deg, #6f8096, #a1afc0);
}

/* Window list */
.jump {
    position: absolute;
    left: 300px;
    top: 604px;
    width: 380px;
    height: 79px;
    padding: 7px 10px;
    background: #738298;
    border: 1px solid #c4ccd8;
    outline: 1px solid #56657c;
    outline-offset: -2px;
}

.jump-item {
    height: 31px;
    display: flex;
    align-items: center;
    gap: 4px;
    padding-left: 6px;
    font-size: 11.5px;
    letter-spacing: -0.33px;
    color: #fff;
    white-space: nowrap;
}

.hover {
    height: 32px;
    background: linear-gradient(#8d9db3, #9aabc2);
    border: 1px solid #a3b2c8;
    border-radius: 3px;
    padding: 0 0 2px 5px;
}

.close {
    margin: 0 5px 0 auto;
}

.cursor {
    position: absolute;
    left: 481px;
    top: 663px;
}
```
